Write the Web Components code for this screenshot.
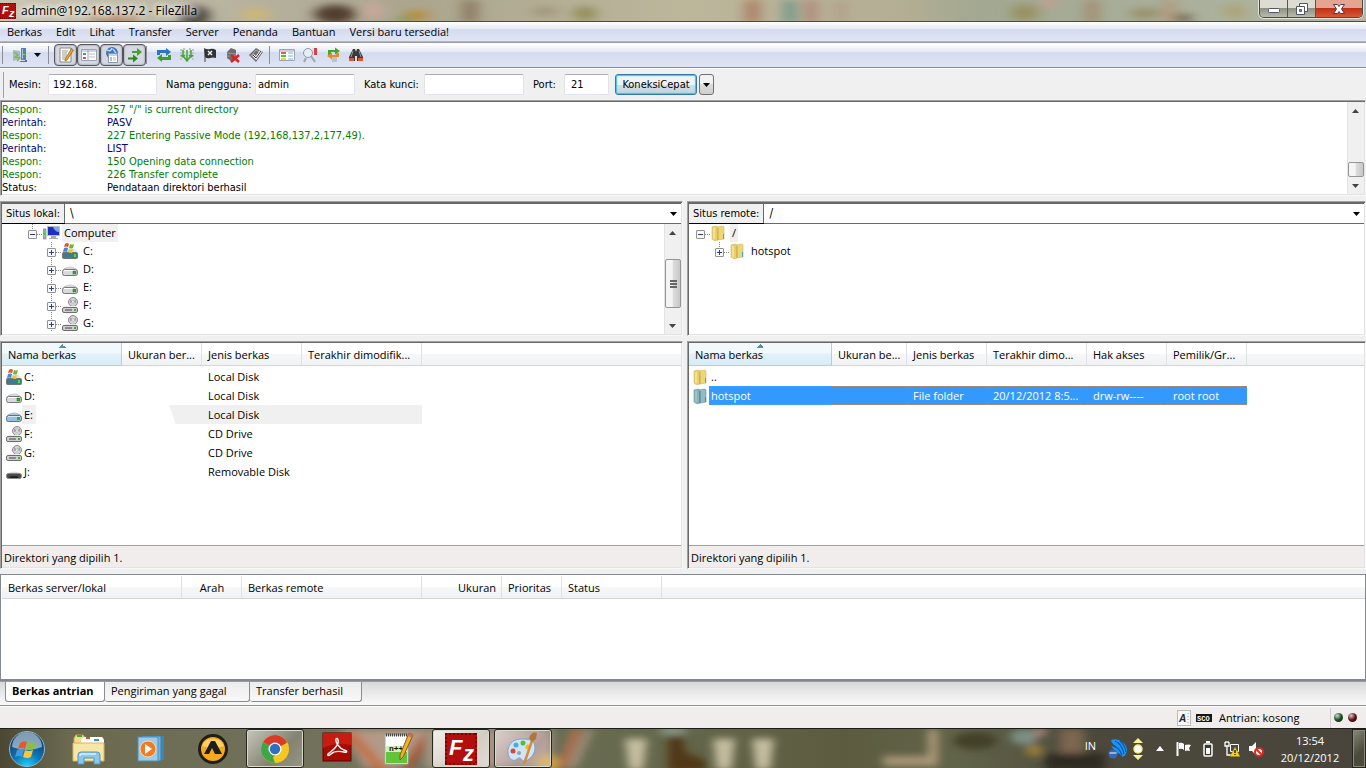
<!DOCTYPE html>
<html lang="id">
<head>
<meta charset="utf-8">
<title>admin@192.168.137.2 - FileZilla</title>
<style>
html,body{margin:0;height:100%}
body{background:#f0f0f0;color:#000;font:11px/16px "Open Sans","Noto Sans","Liberation Sans",sans-serif;overflow:hidden;
--dialog-font:11px/13px "DejaVu Sans Condensed","Liberation Sans",sans-serif}
</style>
</head>
<body>
<fz-app></fz-app>
<script>
const ICONS = {
fz:[16,16,`<rect width="16" height="16" fill="#b30d0d"/><path d="M0 .5h16M0 15.5h16M.5 0v16M15.500 0v16" stroke="#7d0000" stroke-dasharray="1 1"/><text x="2" y="11" font-family="Liberation Sans,sans-serif" font-weight="700" font-style="italic" font-size="11" fill="#fff">F</text><text x="9" y="14" font-family="Liberation Sans,sans-serif" font-weight="700" font-style="italic" font-size="11" fill="#fff">z</text>`],
site:[16,16,`<rect x="9" y="1" width="5" height="12" fill="#5c7fa8"/><rect x="10" y="2" width="1" height="10" fill="#a9c3de"/><path d="M7 15h8v-2h-2v1H9z" fill="#56718e"/><path d="M1 3l7 1v8l-7 2z" fill="#a9bdb6"/><path d="M2 5l4 3-3 2 5 1-3 3" stroke="#7fb56a" stroke-width="1.500" fill="none"/><rect x="11" y="7" width="2" height="1" fill="#4f4"/>`],
log:[16,16,`<path d="M2 1h11v14H2z" fill="#fff" stroke="#888"/><path d="M4 4h6M4 6h5M4 8h5M4 10h4M4 12h3" stroke="#999"/><path d="M13.500 1.500l2 1.500-6.500 10-2 1 .5-2.500z" fill="#f2a41b" stroke="#8a5a10" stroke-width=".7"/>`],
tree:[16,16,`<path d="M.5 2.500h15v11H.5z" fill="#fff" stroke="#9aa4ae"/><path d="M1 3h14v2H1z" fill="#cdd6df"/><path d="M7 3v10" stroke="#9aa4ae"/><rect x="2" y="6" width="3" height="2" fill="#4b88c9"/><rect x="2" y="10" width="3" height="2" fill="#c35b4d"/><path d="M8 7h6M8 10h6" stroke="#bbc"/>`],
remote:[16,16,`<circle cx="8" cy="6" r="6" fill="#3f73bd"/><path d="M3 3q4 2 5-2M9 2q3 3 3 6" stroke="#b9d9f5" stroke-width="1.500" fill="none"/><path d="M4.500 6.500h9v9h-9z" fill="#fff" stroke="#8894a2"/><path d="M5 7h8v2H5z" fill="#c9d4e0"/><path d="M6 11h2M6 13h2" stroke="#4b88c9"/><path d="M9 11h3M9 13h3" stroke="#bbb"/>`],
queue:[16,16,`<path d="M5 4h5V1l5 4-5 4V6H5z" fill="#41a32a"/><path d="M1 10.500h5v-3l5 4-5 4v-3H1z" fill="#2e8a1b"/>`],
refresh:[16,16,`<path d="M1 8V3h9V1l5 4-5 4V6H4v2z" fill="#2b74c5"/><path d="M15 8v5H6v2l-5-4 5-4v3h6V8z" fill="#3b9f2c"/>`],
process:[16,16,`<path d="M2 2v12M5 1v5M11 1v5M14 2v12" stroke="#b9c6cf" stroke-width="2" stroke-dasharray="2 1"/><path d="M8 3v11M5 10l3 4 3-4M4 3v7M2 8l2 2 2-2M12 3v7M10 8l2 2 2-2" stroke="#45a52d" stroke-width="1.500" fill="none"/>`],
flag:[16,16,`<path d="M3 3v12" stroke="#777" stroke-width="1.500"/><path d="M2 1q3 2 6 1t6 1v8q-3-1-6 0t-5-1z" fill="#333"/><path d="M6 4l4 4M10 4L6 8" stroke="#eee" stroke-width="1.500"/>`],
disconnect:[16,16,`<path d="M2 5l4-4 5 2v9l-5 2-4-3z" fill="#6d6d6d"/><path d="M2 6l9 1M2 9h9" stroke="#999"/><path d="M6 8l8 7M14 8l-8 7" stroke="#e02020" stroke-width="2.500"/>`],
reconnect:[16,16,`<path d="M1 8l7-7 7 4-7 10z" fill="#6f6f6f"/><path d="M3 9l5-6 5 3" stroke="#aaa" fill="none"/><path d="M5 8l3 3 5-7" stroke="#fff" stroke-width="2.500" fill="none"/><path d="M5 8l3 3 5-7" stroke="#333" fill="none"/>`],
filter:[16,16,`<path d="M.5 2.500h15v11H.5z" fill="#fff" stroke="#9aa4ae"/><path d="M1 3h14v2H1z" fill="#c8d2dc"/><rect x="2" y="5" width="5" height="2" fill="#e35b4b"/><rect x="2" y="8" width="5" height="2" fill="#4fc03b"/><rect x="2" y="11" width="5" height="2" fill="#f0d33c"/><path d="M9 6h5M9 9h5M9 12h5" stroke="#7fb0e0"/>`],
compare:[16,16,`<path d="M10 1h5v10h-5z" fill="#dde3ea"/><rect x="12" y="1" width="3" height="7" fill="#d24444"/><circle cx="6" cy="6" r="4.500" fill="#e6edf3" stroke="#8d99a5"/><path d="M9 9l4 6M2 15l2-4" stroke="#9aa" stroke-width="2"/>`],
sync:[16,16,`<path d="M6 9h6v6H7z" fill="#b7c5d2"/><path d="M3 8V3h7V.5L15 4l-5 3.500V5H6v3z" fill="#47a52e"/><path d="M14 6v4H7v2.500L2 9l5-3.500V8h4V6z" fill="#e78a2b"/>`],
find:[16,16,`<path d="M5 2h2l1 3 1-3h2l4 8v4H9V9H7v5H1v-4z" fill="#3a3a3a"/><path d="M5 4l-2 6M11 4l2 6" stroke="#999"/><rect x="1" y="11" width="5" height="3" fill="#e2562c"/><rect x="10" y="11" width="5" height="3" fill="#e2562c"/>`],
drive:[16,16,`<path d="M2 8q6-4 12 0z" fill="#f0f0f0" stroke="#aaa" stroke-width=".6"/><rect x=".5" y="8.500" width="15" height="6" rx="2" fill="#d9d9dd" stroke="#77777c"/><path d="M2 9.500h12" stroke="#fff"/><rect x="11" y="10" width="3" height="3" fill="#31b31b" stroke="#276d1c" stroke-width=".5"/>`],
drivesel:[16,16,`<path d="M2 8q6-4 12 0z" fill="#c3dcf4" stroke="#89a" stroke-width=".6"/><rect x=".5" y="8.500" width="15" height="6" rx="2" fill="#9dbde2" stroke="#52749c"/><path d="M2 9.500h12" stroke="#d6e8fa"/><rect x="11" y="10" width="3" height="3" fill="#31b31b"/>`],
windrive:[16,16,`<path d="M1 9l2-3h10l2 3z" fill="#dfe5e8"/><rect x=".5" y="9.500" width="15" height="6" rx="1" fill="#3c7c93" stroke="#777"/><rect x="12" y="11" width="2" height="3" fill="#4be03a"/><path d="M3 1q2-2 4 0L6 4Q4 3 2 4z" fill="#e8532a"/><path d="M8 1q2 1 4 0l-1 4q-2 1-4 0z" fill="#73b52f"/><path d="M2 5q2-1 4 0L5 9Q3 8 1 9z" fill="#3d8cdb"/><path d="M7 6q2 1 4 0l-1 4q-2 0-4-1z" fill="#f6c32c"/>`],
cd:[16,16,`<circle cx="11" cy="5" r="4.500" fill="#d2d4d6" stroke="#8b8b8b"/><path d="M11 5l3-3v4z" fill="#86b986"/><path d="M11 5L8 2v4z" fill="#b68fb3"/><circle cx="11" cy="5" r="1.300" fill="#fff" stroke="#999" stroke-width=".5"/><path d="M3 9h11l1 2H1z" fill="#ececec"/><rect x=".5" y="10.500" width="15" height="5" rx="1.500" fill="#cfcfd2" stroke="#6d6d6d"/><path d="M3 13h7" stroke="#444"/><rect x="12" y="12" width="2" height="2" fill="#31b31b"/>`],
removable:[16,16,`<path d="M2 9q6-3 12 0z" fill="#ddd"/><rect x=".5" y="9.500" width="15" height="5" rx="2" fill="#4b4b4d" stroke="#888"/><path d="M3 14l2-2h6l2 2z" fill="#222"/>`],
computer:[17,16,`<rect x="0" y="4" width="3" height="10" fill="#a9b0b5" stroke="#777" stroke-width=".6"/><rect x="1" y="6" width="1" height="4" fill="#3bd32a"/><rect x="4.500" y="1.500" width="12" height="9" fill="#1c2fc0" stroke="#b9c0c9"/><path d="M10 2h6v5q-4 0-6-5z" fill="#7aa6f0"/><path d="M8 11h5v2h2v1H6v-1h2z" fill="#a5acb3"/>`],
folder:[14,16,`<path d="M1 2l4-1 2 1v13l-3 1-3-2z" fill="#e8cf6a" stroke="#d3b65a" stroke-width=".6"/><path d="M6 2l6-1 1 1v12l-6 1z" fill="#edd67a" stroke="#d3b65a" stroke-width=".6"/><path d="M7 3v12" stroke="#c9a843"/><path d="M3 3v11" stroke="#fbf2bf"/><rect x="12" y="9" width="1" height="5" fill="#4ba3dc"/>`],
foldersel:[14,16,`<path d="M1 2l4-1 2 1v13l-3 1-3-2z" fill="#8cb4b8" stroke="#5f929f" stroke-width=".6"/><path d="M6 2l6-1 1 1v12l-6 1z" fill="#90bcc4" stroke="#5f929f" stroke-width=".6"/><path d="M7 3v12" stroke="#4f7f8d"/><path d="M3 3v11" stroke="#b3d2d2"/><rect x="12" y="9" width="1" height="5" fill="#2b8fe0"/>`],
down:[8,4,`<path d="M0 0h7L3.500 4z" fill="currentColor"/>`],
up:[8,4,`<path d="M0 4h7L3.500 0z" fill="currentColor"/>`],
min:[12,12,`<rect x=".5" y="5.500" width="11" height="4" rx="1" fill="#fff" stroke="#535666"/>`],
max:[12,12,`<path d="M3.500.5h8v8h-8z" fill="#fff" stroke="#535666"/><path d="M.5 3.500h8v8h-8z" fill="#fff" stroke="#535666"/><path d="M3.500 6.500h2v2h-2z" fill="#8d9388" stroke="#535666"/>`],
close:[12,10,`<path d="M.5.5h4L6 2.500 7.500.5h4L8.500 5l3 4.500h-4L6 7.500 4.500 9.500h-4L3.500 5z" fill="#fff" stroke="#54384a"/>`],
orb:[36,38,`<defs><radialGradient id="g" cx=".5" cy="1" r=".9"><stop offset="0" stop-color="#1fd5ff"/><stop offset=".45" stop-color="#0f75b5"/><stop offset="1" stop-color="#123a63"/></radialGradient></defs><circle cx="18" cy="19" r="17.500" fill="url(#g)" stroke="#8fb6c9"/><path d="M3 17a15 15 0 0 1 30 0q-15 6-30 0z" fill="#cfe0ea" opacity=".6"/><path d="M11 13q4-3 7-1l-2 7q-4-2-7 0z" fill="#e65a29"/><path d="M19 12q4 2 8 0l-2 7q-4 2-8 0z" fill="#8cbf3a"/><path d="M8 20q4-2 7 0l-2 7q-3-2-7 0z" fill="#3f9be0"/><path d="M16 20q4 2 8 0l-2 7q-4 2-8 0z" fill="#fbc73a"/>`],
explorer:[34,32,`<path d="M2 5l2-3h7l2 3h18v20H2z" fill="#f3dc8e" stroke="#c8a94e"/><rect x="5" y="2" width="5" height="2" fill="#2fae3a"/><path d="M9 7l3-3h18l2 3v4H9z" fill="#fff"/><rect x="14" y="4" width="4" height="2" fill="#d94b3b"/><rect x="22" y="6" width="5" height="2" fill="#3f8fd6"/><path d="M1 10h31v18H1z" fill="#f7e6a4" stroke="#d2b662"/><path d="M6 31V22q0-3 3-3h16q3 0 3 3v9h-6v-6h-10v6z" fill="#8cc6e8" stroke="#4f97c4"/><path d="M8 23q0-2 2-2h14" stroke="#d9f0fb" stroke-width="1.500" fill="none"/>`],
wmp:[28,28,`<path d="M8 1h19v24H8z" fill="#3e86b8"/><path d="M5 1h19v25H5z" fill="#70b3dc" stroke="#3a7fae"/><path d="M1 2h20v24H1z" fill="#9ccbe8" stroke="#4b8fbc"/><circle cx="11" cy="14" r="8" fill="#f07c22" stroke="#fbd7b3"/><path d="M8 9l7 5-7 5z" fill="#fff"/>`],
aimp:[32,32,`<circle cx="16" cy="16" r="15" fill="#1d1d1d"/><circle cx="16" cy="16" r="12" fill="#f7a81c"/><path d="M5 13a12 12 0 0 1 22 0q-11 4-22 0z" fill="#ffd067"/><path d="M14 8h4l7 13h-7l-3-6-3 6H7z" fill="#1d1d1d"/>`],
chrome:[30,30,`<circle cx="15" cy="15" r="14" fill="#f5c722"/><path d="M15 15L2.900 8A14 14 0 0 1 27.100 8z" fill="#d93a2b"/><path d="M15 15L2.900 8A14 14 0 0 0 15 29z" fill="#3fa648"/><path d="M15 8.500h12.400L15 15z" fill="#d93a2b"/><path d="M20.500 18L15 29l-2-6z" fill="#f5c722"/><circle cx="15" cy="15" r="6.500" fill="#fff"/><circle cx="15" cy="15" r="5.200" fill="#2e6fc0"/>`],
adobe:[30,34,`<rect x="1" y="1" width="28" height="28" fill="#a80b02" stroke="#5f0500"/><path d="M1 1h28v12Q14 10 1 16z" fill="#c91c10"/><path d="M6 22c3-3 8-5 10-11 1-3-1-6-2-4-1 3 4 10 8 11 4 1 3 3 0 2-5-1-10-1-13 2-2 2-4 2-3 0z" fill="none" stroke="#fff" stroke-width="1.400"/>`],
npp:[30,34,`<path d="M1 3h23v29H1z" fill="#fff" stroke="#9aa"/><path d="M2 18h21v13H2z" fill="#62c43a"/><path d="M2 14h21v6H2z" fill="#d2efb8"/><path d="M2 3h21" stroke="#444" stroke-width="3" stroke-dasharray="1 1"/><text x="5" y="19" font-family="Liberation Mono,monospace" font-size="8" font-weight="700" fill="#111">n++</text><path d="M25 1l4 2-10 22-3 3v-5z" fill="#f0b028" stroke="#855c14"/><path d="M25 1l4 2-1 3-4-2z" fill="#d06a6a"/>`],
paint:[34,34,`<path d="M15 7C6 7 1 14 2 21s6 9 9 6c2-2 4-1 5 1 2 4 13-3 13-12S22 7 15 7z" fill="#cfe5f5" stroke="#78a6c8"/><circle cx="7" cy="19" r="2.500" fill="#dc4435"/><circle cx="10" cy="13" r="2.500" fill="#4fa8e0"/><circle cx="17" cy="11" r="2.500" fill="#59b83b"/><circle cx="22" cy="15" r="2.500" fill="#f3b52c"/><circle cx="13" cy="21" r="2" fill="#8fa1ae"/><path d="M27 6l-9 26" stroke="#d98a3c" stroke-width="2.500"/><path d="M23 6q3-7 8-5l-1 6-4 3z" fill="#b1743b"/>`],
bird:[22,22,`<path d="M3 2q7-2 11 2 5 3 5 9-1 4-4 6-2-3-7-5L3 8q4 1 5 0Q4 6 3 2z" fill="#1e95f5"/><path d="M7 3q7 3 9 13M12 3q5 4 6 11M5 8q6 1 9 9" stroke="#0b58b0" stroke-width="1.300" fill="none"/><circle cx="5" cy="16" r="4.500" fill="#3468b4"/><path d="M1.500 15h7" stroke="#fff"/>`],
dots:[12,22,`<g fill="#f9f49a"><path d="M1 5l5-5 5 5zM1 17l5 5 5-5z"/><circle cx="6" cy="11" r="4" fill="#fff" stroke="#f4ee77" stroke-width="1.500"/></g>`],
caret:[8,5,`<path d="M0 5h8L4 0z" fill="#fff"/>`],
action:[16,16,`<path d="M1.500 1v14" stroke="#fff" stroke-width="2"/><path d="M3 2q3-1 5 1v6Q6 7 3 8zM9 4q3-1 6 0l-2 3 1 3q-3-1-5 0z" fill="#fff"/>`],
battery:[10,16,`<path d="M3 0h4v2H3z" fill="#fff"/><rect x="1" y="3" width="8" height="12" rx="1" fill="#3a392e" stroke="#fff" stroke-width="1.500"/><rect x="3" y="7" width="4" height="6" fill="#fff"/>`],
net:[16,16,`<path d="M1 1v4h4V1M3 5v9h4M2 0v2M4 0v2" stroke="#fff" stroke-width="1.300" fill="none"/><path d="M6.500 3.500h8v7h-8z" fill="#4b4a3d" stroke="#fff"/><path d="M11 6l5 9.500H6z" fill="#f8d11f" stroke="#a38305" stroke-width=".5"/><path d="M11 9v3M11 13v1" stroke="#111" stroke-width="1.300"/>`],
mute:[16,16,`<path d="M1 5h3l4-4v13l-4-4H1z" fill="#fff"/><circle cx="11" cy="11" r="4" fill="#fff" stroke="#e02a1d" stroke-width="2"/><path d="M8 8l6 6" stroke="#e02a1d" stroke-width="2"/>`],
ascii:[14,16,`<rect x=".5" y=".5" width="13" height="15" fill="#f6f6f6" stroke="#bbb"/><text x="2" y="12" font-family="Liberation Sans,sans-serif" font-style="italic" font-weight="700" font-size="10" fill="#222">A</text><path d="M11 3v11" stroke="#999" stroke-dasharray="1 2"/>`],
sco:[16,8,`<rect width="16" height="8" fill="#161616"/><text x="1" y="7" font-family="Liberation Mono,monospace" font-weight="700" font-size="7" fill="#fff">SCO</text>`]
};
const svg=(n,scale=1)=>{const [w,h,d]=ICONS[n];return `<svg aria-hidden="true" width="${w*scale}" height="${h*scale}" viewBox="0 0 ${w} ${h}">${d}</svg>`};

/* Two-tone sunken edge shared by the log and the panels. */
const SUNKEN='border:1px solid;border-color:#a0a0a0 #f8f8f8 #f8f8f8 #a0a0a0;padding:1px;box-shadow:inset 1px 1px #696969,inset -1px -1px #e3e3e3;background:#fff;';

/* Registers an element whose shadow tree is cloned from a template. */
function define(name, css, html, setup){
  const fixed = typeof html==='string';
  const t=document.createElement('template');
  customElements.define(name, class extends HTMLElement{
    connectedCallback(){
      if(this.shadowRoot) return;
      const root=this.attachShadow({mode:'open'});
      t.innerHTML=`<style>*{box-sizing:border-box}:host{display:block;box-sizing:border-box}button,input,select{font:inherit;color:inherit;margin:0}svg{display:block;flex:none}${css}</style>${fixed?html:html(this)}`;
      root.append(t.content.cloneNode(true));
      if(setup) setup(root,this);
    }
  });
}

define('fz-icon',':host{display:block;flex:none}',e=>svg(e.getAttribute('name'),+(e.getAttribute('scale')||1)));

define('title-bar',`
:host{position:relative;height:22px;background:#b2af96;border-bottom:1px solid #4f4a3f;box-shadow:inset 0 -1px #d8d6c4;overflow:hidden}
.wall{position:absolute;inset:0;width:100%;height:100%}
.row{position:relative;display:flex;align-items:flex-start;height:21px}
fz-icon{margin-top:3px}
h1{flex:1;margin:0;padding:3px 5px;font:inherit;font-size:12px;line-height:16px;text-shadow:0 0 6px #fff,0 0 6px #fff,0 0 8px #fff}
.ctl{display:flex;margin-right:3px;border:1px solid #4b4b45;border-top:0;border-radius:0 0 5px 5px;overflow:hidden;box-shadow:0 0 0 1px #e4e4d8}
.ctl button{display:grid;place-items:center;width:28px;height:17px;padding:0;border:0;border-right:1px solid #55564d;background:linear-gradient(#dcdcd2 45%,#8f9283 50%,#b9bbac)}
.ctl button:last-child{width:46px;border:0;background:linear-gradient(#e5a492 45%,#bf3116 50%,#d9583a)}`,`
<svg class="wall" viewBox="0 0 1366 22" preserveAspectRatio="none" aria-hidden="true"><defs><filter id="b"><feGaussianBlur stdDeviation="7 4"/></filter><linearGradient id="l"><stop offset="0" stop-color="#c9c6b4"/><stop offset=".3" stop-color="#aba58f"/><stop offset=".5" stop-color="#bcb79b"/><stop offset=".66" stop-color="#b3ae94"/><stop offset=".72" stop-color="#a2a892"/><stop offset="1" stop-color="#b1b7a3"/></linearGradient></defs><rect width="1366" height="22" fill="url(#l)"/>
<g filter="url(#b)"><ellipse cx="195" cy="17" rx="15" ry="11" fill="#4b463d"/><ellipse cx="115" cy="20" rx="25" ry="5" fill="#b38a66"/><ellipse cx="255" cy="15" rx="14" ry="6" fill="#cfb873"/><ellipse cx="335" cy="15" rx="21" ry="10" fill="#513d2e"/><ellipse cx="373" cy="11" rx="9" ry="8" fill="#cda79b"/><ellipse cx="417" cy="16" rx="12" ry="5" fill="#bd8b35"/><ellipse cx="405" cy="20" rx="8" ry="3" fill="#6c9b45"/><rect x="462" width="16" height="24" fill="#8d7d64"/><ellipse cx="585" cy="14" rx="12" ry="8" fill="#94905b"/><ellipse cx="545" cy="12" rx="14" ry="5" fill="#a0977d"/><rect x="745" width="15" height="24" fill="#ab8066"/><rect x="784" width="12" height="24" fill="#6f958a"/><rect x="806" width="10" height="24" fill="#af8076"/><rect x="835" width="12" height="24" fill="#b2a088"/><ellipse cx="1025" cy="13" rx="14" ry="9" fill="#989160"/><ellipse cx="1050" cy="3" rx="7" ry="5" fill="#cf9a90"/><rect x="1085" width="14" height="24" fill="#a38f73"/><ellipse cx="1145" cy="14" rx="15" ry="6" fill="#98916b"/><rect x="1163" width="13" height="24" fill="#b09a7d"/><ellipse cx="1183" cy="19" rx="7" ry="4" fill="#4f3626"/><ellipse cx="1235" cy="12" rx="12" ry="8" fill="#ada478"/></g></svg>
<div class="row"><fz-icon name="fz"></fz-icon><h1>admin@192.168.137.2 - FileZilla</h1><div class="ctl"><button aria-label="Minimalkan">${svg('min')}</button><button aria-label="Pulihkan">${svg('max')}</button><button aria-label="Tutup">${svg('close')}</button></div></div>`);

define('menu-bar',`
:host{height:20px;background:linear-gradient(#fff,#e6eaf5 35%,#d4dbee 40%,#dfe4f5 90%);border-bottom:1px solid #b4b8c9}
nav{display:flex;gap:14px;padding:1px 7px}
a{color:inherit;text-decoration:none;line-height:18px;white-space:nowrap}`,
'<nav>'+['Berkas','Edit','Lihat','Transfer','Server','Penanda','Bantuan','Versi baru tersedia!'].map(t=>`<a href="#">${t}</a>`).join('')+'</nav>');

define('tool-button',`
:host{flex:none}
button{display:grid;place-items:center;width:23px;height:22px;padding:0;border:0;background:none}
:host([pressed]) button{border:1px solid #55565c;border-radius:4px;background:#d6d9e3;box-shadow:inset 0 0 2px #777}`,
e=>`<button aria-label="${e.title}">${svg(e.getAttribute('icon'))}</button>`);

define('tool-bar',`
:host{height:26px;border-top:1px solid #9a9a9d;border-bottom:1px solid #8c8c90;background:linear-gradient(#fff,#e6eaf5 35%,#d4dbee 40%,#dfe4f5)}
[role=toolbar]{display:flex;align-items:center;height:24px;padding-left:2px}
i{width:1px;height:18px;margin:0 5px 0 0;background:#8b8d98}
i.end{margin:0 5px 0 2px}
.drop{display:grid;place-items:center;width:14px;height:22px;padding:0;border:0;background:none;margin-right:3px}`,
`<div role="toolbar"><i></i><tool-button icon="site" title="Manajer situs"></tool-button><button class="drop" aria-label="Daftar situs">${svg('down')}</button><i></i><tool-button pressed icon="log" title="Log"></tool-button><tool-button pressed icon="tree" title="Pohon lokal"></tool-button><tool-button pressed icon="remote" title="Pohon remote"></tool-button><tool-button pressed icon="queue" title="Antrian"></tool-button><i></i><tool-button icon="refresh" title="Segarkan"></tool-button><tool-button icon="process" title="Proses antrian"></tool-button><tool-button icon="flag" title="Batalkan"></tool-button><tool-button icon="disconnect" title="Putuskan"></tool-button><tool-button icon="reconnect" title="Hubungkan lagi"></tool-button><i class="end"></i><tool-button icon="filter" title="Filter"></tool-button><tool-button icon="compare" title="Bandingkan"></tool-button><tool-button icon="sync" title="Sinkronkan"></tool-button><tool-button icon="find" title="Cari"></tool-button></div>`);

define('quick-connect',`
:host{height:32px;border-top:1px solid #fff;font:var(--dialog-font)}
form{display:flex;align-items:center;height:31px;margin:0;padding-left:3px}
i{width:1px;height:26px;margin-right:5px;background:#a0a0a0}
.field{display:grid;align-items:center;margin-right:9px;white-space:nowrap}
.host{grid-template-columns:39px 109px}.user{grid-template-columns:89px 100px}.pass{grid-template-columns:60px 100px}.port{grid-template-columns:31px 45px;margin-right:6px}
input{width:100%;height:21px;padding:0 6px 1px;border:1px solid #e2e3ea;border-top-color:#abadb3;border-radius:2px;background:#fff;outline:0}
.host input{padding:0 4px 1px}.user input{padding:0 2px 1px}
.go{width:82px;height:21px;padding:0;border:1px solid #2f7cab;border-radius:3px;background:linear-gradient(#eff3f5 50%,#d3dfe6 52%,#c3d3dc);box-shadow:inset 0 0 1px 1px #3ec1ee}
.more{display:grid;place-items:center;width:15px;height:21px;margin-left:2px;padding:0;border:1px solid #707070;border-radius:3px;background:linear-gradient(#f2f2f2 50%,#dcdcdc 50%,#cfcfcf)}`,`
<form><i></i><div class="field host"><label for="h">Mesin:</label><input id="h" value="192.168."></div><div class="field user"><label for="u">Nama pengguna:</label><input id="u" value="admin"></div><div class="field pass"><label for="p">Kata kunci:</label><input id="p" type="password"></div><div class="field port"><label for="o">Port:</label><input id="o" value="21"></div><button type="button" class="go">KoneksiCepat</button><button type="button" class="more" aria-label="Riwayat">${svg('down')}</button></form>`);

define('scroll-bar',`
:host{display:flex;flex-direction:column;flex:none;width:17px;background:#f0f0f0;border-left:1px solid #e3e3e3}
button{display:grid;place-items:center;height:17px;padding:0;border:0;background:none;color:#444;flex:none}
.track{display:flex;flex:1;flex-direction:column;justify-content:flex-end;padding-bottom:var(--thumb-pad,0)}
.thumb{display:grid;place-items:center;height:var(--thumb,15px);border:1px solid #959595;border-radius:2px;background:linear-gradient(90deg,#f5f5f5 45%,#dcdcdc 50%,#c8c8cb)}
.thumb.grip::before{content:"";width:7px;height:8px;background:repeating-linear-gradient(#666 0 2px,transparent 2px 3px)}`,
e=>`<button aria-label="Naik">${svg('up')}</button><div class="track"><div class="thumb ${e.hasAttribute('grip')?'grip':''}"></div></div><button aria-label="Turun">${svg('down')}</button>`);

define('message-log',`
:host{display:flex;height:96px;${SUNKEN}font:var(--dialog-font)}
table{flex:1;border-collapse:collapse;margin:1px 0 0;table-layout:fixed;align-self:flex-start}
td{padding:0;height:13px;white-space:pre}
td:first-child{width:105px}
.r{color:#008000}.c{color:#000080}`,
'<table aria-label="Log pesan">'+[['r','Respon:','257 "/" is current directory'],['c','Perintah:','PASV'],['r','Respon:','227 Entering Passive Mode (192,168,137,2,177,49).'],['c','Perintah:','LIST'],['r','Respon:','150 Opening data connection'],['r','Respon:','226 Transfer complete'],['','Status:','Pendataan direktori berhasil']].map(r=>`<tr class="${r[0]}"><td>${r[1]}</td><td>${r[2]}</td></tr>`).join('')+'</table><scroll-bar></scroll-bar>');

define('path-bar',`
:host{display:grid;grid-template-columns:auto 1fr;height:21px;border-bottom:1px solid #696969;background:#fff;font:var(--dialog-font);border-top:1px solid #696969}
label{padding:3px 4px 0;border-right:1px solid #696969;background:#f0f0f0;white-space:nowrap;box-shadow:0 1px #000}
.combo{display:grid;align-items:center}
.combo>*{grid-area:1/1}
select{appearance:none;width:100%;height:19px;padding:0 20px 0 5px;border:0;background:none;outline:0;font-size:12px}
svg{justify-self:end;margin-right:3px;pointer-events:none}`,
e=>`<label for="s">${e.getAttribute('label')}</label><div class="combo"><select id="s"><option>${e.getAttribute('path')}</option></select>${svg('down')}</div>`);

define('tree-item',`
:host{display:flex;align-items:center;height:18px;padding-left:calc(7px + 19px*var(--level,0))}
.exp{--v:repeating-linear-gradient(#888 0 1px,transparent 1px 2px);display:flex;align-items:center;width:15px;height:18px;padding-top:3px;background:repeating-linear-gradient(90deg,#888 0 1px,transparent 1px 2px) 9px 10px/6px 1px no-repeat,var(--v) 4px 0/1px var(--line,100%) no-repeat}
button{display:grid;place-items:center;width:9px;height:9px;padding:0;border:1px solid #919191;border-radius:1px;background:linear-gradient(90deg,#2b3f92,#2b3f92) center/5px 1px no-repeat,var(--plus,linear-gradient(transparent,transparent)),#f8f8f8}
:host([closed]){--plus:linear-gradient(#2b3f92,#2b3f92) center/1px 5px no-repeat}
.pic{width:19px}
.name{padding:0 2px;height:18px;line-height:18px}
:host([selected]) .name{background:#f0f0f0}`,
e=>`<span class="exp"><button aria-label="Buka atau tutup"></button></span><span class="pic">${svg(e.getAttribute('icon'))}</span><span class="name"><slot></slot></span>`,
(r,e)=>{e.style.setProperty('--level',e.getAttribute('level'))});

define('site-panel',`
:host{display:flex;flex-direction:column;height:135px;${SUNKEN}}
.tree{display:flex;flex:1;min-height:0;overflow:hidden}
.items{flex:1}
scroll-bar{--thumb:49px;--thumb-pad:9px}`,
e=>`<path-bar label="${e.getAttribute('label')}" path="${e.getAttribute('path')}"></path-bar><div class="tree"><div class="items" role="tree"><slot></slot></div>${e.hasAttribute('scroll')?'<scroll-bar grip></scroll-bar>':''}</div>`);

/* Column widths, headings and rows of each list. */
const LISTS={
local:{cols:[120,80,100,120],heads:['Nama berkas','Ukuran ber...','Jenis berkas','Terakhir dimodifik...'],sorted:true,
 rows:[['windrive','C:','','Local Disk'],['drive','D:','','Local Disk'],['drivesel','E:','','Local Disk'],['cd','F:','','CD Drive'],['cd','G:','','CD Drive'],['removable','J:','','Removable Disk']],hover:2},
remote:{cols:[143,75,80,100,80,80],heads:['Nama berkas','Ukuran be...','Jenis berkas','Terakhir dimo...','Hak akses','Pemilik/Gr...'],sorted:true,
 rows:[['folder','..','','','','',''],['foldersel','hotspot','','File folder','20/12/2012 8:5...','drw-rw----','root root']],sel:1},
queue:{cols:[180,60,180,80,60,100],heads:['Berkas server/lokal','Arah','Berkas remote','Ukuran','Prioritas','Status'],align:{1:'center',3:'right'},rows:[]}};
define('file-list',`
:host{display:block;background:#fff}
table{width:100%;table-layout:fixed;border-collapse:separate;border-spacing:0}
th{height:23px;padding:1px 5px 0 6px;font-weight:400;text-align:left;white-space:nowrap;background:linear-gradient(#fff 50%,#f6f7f8 52%,#f1f2f4);border-right:1px solid #dfe2e5;border-bottom:1px solid #d5d5d5;overflow:hidden}
th:last-child{border-right:0}
th.sorted{background:conic-gradient(from 135deg at 50% 0,#5c8ba6 0 90deg,transparent 0) center 1px/8px 4px no-repeat,linear-gradient(#f2f9fc 45%,#e1f1f9 50%,#d8ecf6);border-color:#96d9f9}
tbody::before{content:"";display:block;height:1px}
td{height:19px;padding:0 0 0 6px;white-space:nowrap;line-height:17px}
td:first-child{padding-left:4px}
.n{display:flex;align-items:center}
.pic{width:16px;flex:none}
.n b{font-weight:400;flex:1;height:19px;line-height:19px;padding-left:2px}
tr.sel{color:#fff}
tr.sel td:not(:first-child):not(:last-child){background:#39f;border-top:1px dotted #a58f7c;border-bottom:1px dotted #a58f7c}
tr.sel b{background:#39f;border:1px dotted #a58f7c;border-right:0;line-height:17px;padding-left:1px}
tr.hov td:nth-child(n+3):not(:last-child){background:#f0f0f0}
tr.hov td:nth-child(2){background:linear-gradient(70deg,transparent 50px,#f0f0f0 51px)}
tr.hov b{background:linear-gradient(90deg,#f0f0f0 14px,transparent 14px)}`,
e=>{const L=LISTS[e.getAttribute('data')];return `<table><colgroup>${L.cols.map(w=>`<col style="width:${w}px">`).join('')}<col></colgroup><thead><tr>${L.heads.map((h,i)=>`<th scope="col" class="${L.sorted&&!i?'sorted':''}" style="text-align:${L.align?.[i]||'left'}">${h}</th>`).join('')}<th></th></tr></thead><tbody>${L.rows.map((r,i)=>`<tr class="${L.sel===i?'sel':L.hover===i?'hov':''}"><td><span class="n"><span class="pic">${svg(r[0])}</span><b>${r[1]}</b></span></td>${L.cols.slice(1).map((_,k)=>`<td>${r[k+2]||''}</td>`).join('')}<td></td></tr>`).join('')}</tbody></table>`});

define('list-panel',`
:host{display:flex;flex-direction:column;min-height:120px;${SUNKEN}}
file-list{flex:1}
footer{height:22px;padding:4px 2px 0;border-top:1px solid #a0a0a0;background:#f0edec}`,
e=>`<file-list data="${e.getAttribute('data')}"></file-list><footer>Direktori yang dipilih 1.</footer>`);

define('tab-strip',`
:host{display:flex;height:25px;padding:0 5px;border-top:1px solid #9a9a9a;border-bottom:1px solid #8a928a;background:linear-gradient(#d9d9d9,#fafafa)}
button{height:20px;padding:0 0 2px 6px;border:1px solid #898c95;border-top:0;border-left:0;border-radius:0 0 3px 3px;background:linear-gradient(#ececec,#f8f8f8);text-align:left;white-space:nowrap}
.a{width:100px;border-left:1px solid #898c95;background:#fff;font-weight:700}
.b{width:145px}.c{width:112px}`,
'<button class="a" role="tab">Berkas antrian</button><button class="b" role="tab">Pengiriman yang gagal</button><button class="c" role="tab">Transfer berhasil</button>');

define('status-bar',`
:host{display:flex;align-items:center;justify-content:flex-end;height:22px;padding-right:9px;border-top:1px solid #fff;background:#f0edec}
fz-icon{margin-right:5px}
fz-icon+fz-icon{margin-right:7px}
p{margin:0;width:111px}
.leds{display:flex;gap:5px;padding-left:3px;border-left:1px solid #d0d0d0;height:20px;align-items:center}
.leds i{width:9px;height:9px;border-radius:50%;background:radial-gradient(circle at 35% 30%,#cfd8cf,#1f4b22 50%,#0d230e)}
.leds i+i{background:radial-gradient(circle at 35% 30%,#dcc8c8,#5a1418 50%,#2b0708)}`,
'<fz-icon name="ascii"></fz-icon><fz-icon name="sco"></fz-icon><p>Antrian: kosong</p><span class="leds"><i></i><i></i></span>');

define('task-button',`
button{display:grid;place-items:center;width:58px;height:39px;padding:0;border:1px solid transparent;border-radius:3px;background:none}
:host([open]) button{border-color:#26261f;box-shadow:inset 0 0 0 1px #d9d9cc;background:linear-gradient(135deg,#ffffff99,#ffffff22 60%,#ffffff44)}
:host([active]) button{background:linear-gradient(135deg,#ffffffdd,#ffffff88 60%,#ffffffaa)}`,
e=>`<button aria-label="${e.title}">${svg(e.getAttribute('icon'),+(e.getAttribute('scale')||1))}</button>`);

define('task-bar',`
:host{position:relative;height:40px;background:#5e5d48;color:#fff;border-top:1px solid #1d1d18;box-shadow:inset 0 1px #b9b7a3;overflow:hidden}
.wall{position:absolute;inset:0;width:100%;height:100%}
.row{position:relative;display:flex;align-items:center;height:39px}
.start{display:grid;place-items:center;width:54px;height:39px;margin-right:6px;padding:0;border:0;background:none}
.apps{display:flex;gap:4px;flex:1}
.tray{display:flex;align-items:center}
.tray button{display:grid;place-items:center;width:24px;height:39px;padding:0;border:0;background:none}
.tray .wide{width:20px}
.lang{padding:0 12px 5px 0}
.tray time{width:84px;line-height:17px;text-align:center}
.tray .desk{width:14px;height:39px;border:1px solid #25251f;box-shadow:inset 0 0 0 1px #8a887a;background:linear-gradient(135deg,#8a887a,#4b4a3d 60%)}`,`
<svg class="wall" viewBox="0 0 1366 40" preserveAspectRatio="none" aria-hidden="true"><defs><filter id="b"><feGaussianBlur stdDeviation="5 4"/></filter><linearGradient id="l"><stop offset="0" stop-color="#4b4733"/><stop offset=".05" stop-color="#6b6a50"/><stop offset=".3" stop-color="#747360"/><stop offset=".48" stop-color="#65684c"/><stop offset=".62" stop-color="#5c5b40"/><stop offset=".7" stop-color="#62644a"/><stop offset=".8" stop-color="#4c493b"/><stop offset="1" stop-color="#48443b"/></linearGradient></defs><rect width="1366" height="40" fill="url(#l)"/>
<g filter="url(#b)"><path d="M340 0h90L410 40h-45z" fill="#b29a86"/><path d="M350 5L385 45" stroke="#c2703f" stroke-width="10"/><path d="M432 0L405 40" stroke="#a8562f" stroke-width="9"/><rect x="425" y="0" width="70" height="40" fill="#a39480"/><rect x="492" y="0" width="60" height="40" fill="#a98f8a"/><ellipse cx="548" cy="35" rx="12" ry="9" fill="#cda046"/><path d="M578 0L562 40" stroke="#b4714d" stroke-width="9"/><path d="M590 0L572 40" stroke="#a79683" stroke-width="6"/><path d="M625 10h22l-4 32h-14zM713 10h22l-4 32h-14zM752 10h22l-4 32h-14z" fill="#c5bda0"/><path d="M668 4h14l4 20 20 8v12h-38z" fill="#513913"/><ellipse cx="673" cy="2" rx="14" ry="4" fill="#8fa08e"/><path d="M933 0v33h-50" stroke="#ab9878" stroke-width="10" fill="none"/><ellipse cx="975" cy="12" rx="22" ry="9" fill="#434027"/><ellipse cx="1024" cy="8" rx="14" ry="8" fill="#7d9085"/><ellipse cx="1034" cy="22" rx="9" ry="6" fill="#9b7e3a"/><ellipse cx="1040" cy="3" rx="7" ry="4" fill="#b48883"/><rect x="1060" y="0" width="24" height="26" fill="#7c6650"/><rect x="1045" y="25" width="60" height="18" fill="#2f2b21"/></g></svg>
<div class="row"><button class="start" aria-label="Mulai">${svg('orb')}</button><div class="apps"><task-button icon="explorer" title="Explorer"></task-button><task-button icon="wmp" title="Media Player"></task-button><task-button icon="aimp" title="AIMP"></task-button><task-button open icon="chrome" title="Chrome"></task-button><task-button icon="adobe" title="Adobe Reader"></task-button><task-button icon="npp" title="Notepad++"></task-button><task-button open active icon="fz" scale="2" title="FileZilla"></task-button><task-button open icon="paint" title="Paint"></task-button></div>
<div class="tray"><span class="lang">IN</span><button class="wide" aria-label="Penyelaras">${svg('bird')}</button><button class="wide" aria-label="Kecepatan">${svg('dots')}</button>${['caret','action','battery','net','mute'].map(n=>`<button aria-label="${n}">${svg(n)}</button>`).join('')}<time>13:54<br>20/12/2012</time><button class="desk" aria-label="Tampilkan desktop"></button></div></div>`);

define('fz-app',`
:host{display:flex;flex-direction:column;min-height:100vh}
main{display:flex;flex-direction:column;flex:1;gap:5px}
.sites{display:grid;flex:1;grid-template-columns:minmax(0,683fr) minmax(0,679fr);grid-template-rows:auto 1fr;gap:5px 4px}
.queue{display:flex;flex-direction:column;height:107px;border:1px solid #828790;border-bottom-width:2px;background:#fff;padding:1px 0 0 1px}`,`
<title-bar></title-bar><menu-bar></menu-bar><tool-bar></tool-bar><quick-connect></quick-connect>
<main><message-log></message-log>
<div class="sites"><site-panel label="Situs lokal:" path="\\" scroll><tree-item level="1" icon="computer" selected style="--line:9px">Computer</tree-item><tree-item level="2" icon="windrive" closed>C:</tree-item><tree-item level="2" icon="drive" closed>D:</tree-item><tree-item level="2" icon="drive" closed>E:</tree-item><tree-item level="2" icon="cd" closed>F:</tree-item><tree-item level="2" icon="cd" closed>G:</tree-item></site-panel>
<site-panel label="Situs remote:" path="/"><tree-item level="0" icon="folder" selected style="--line:0px">/</tree-item><tree-item level="1" icon="folder" closed style="--line:9px">hotspot</tree-item></site-panel>
<list-panel data="local"></list-panel><list-panel data="remote"></list-panel></div>
<div class="queue"><file-list data="queue"></file-list></div></main>
<tab-strip></tab-strip><status-bar></status-bar><task-bar></task-bar>`);
</script>
</body>
</html>
